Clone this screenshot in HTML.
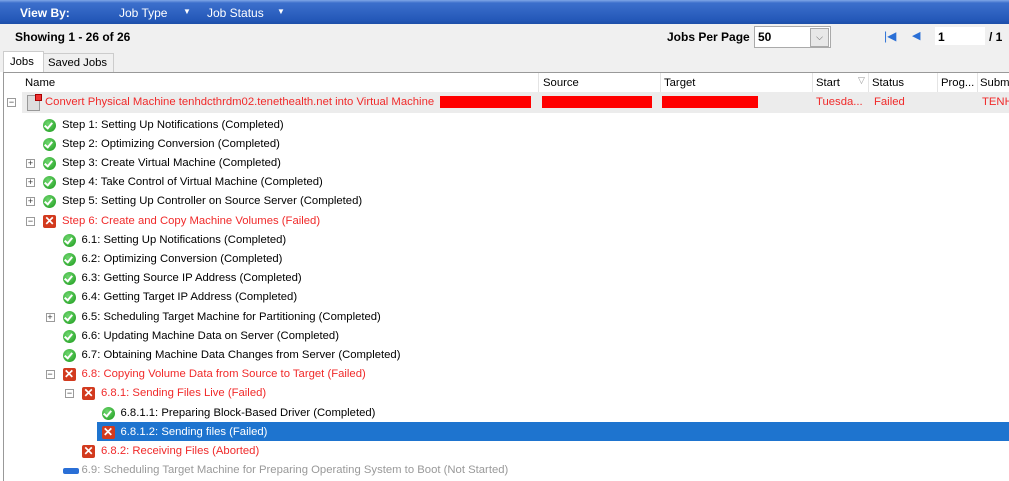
<!DOCTYPE html><html><head><style>
body{margin:0;width:1009px;height:480px;overflow:hidden;background:#fff;font-family:"Liberation Sans",sans-serif;font-size:11px;position:relative}
.a{position:absolute;white-space:nowrap}
.bar{left:0;top:0;width:1009px;height:24px;background:linear-gradient(#7fa6e6 0,#3c6fcc 3px,#2458b8 20px,#1c4ea8 24px)}
.ok{width:13px;height:13px;border-radius:50%;background:radial-gradient(circle at 40% 35%,#6fd66f,#1a9a1a);}
.ok::after{content:"";position:absolute;left:3px;top:2px;width:3px;height:6px;border:solid #fff;border-width:0 2px 2px 0;transform:rotate(40deg)}
.x{width:13px;height:13px;border-radius:2px;background:#d23a1e;color:#fff;font-weight:bold;font-size:12px;line-height:13px;text-align:center}
.ex{width:7px;height:7px;border:1px solid #9a9a9a;background:#fff;font-size:9px;line-height:7px;text-align:center;color:#333}
.r{color:#f02a2a}
.red{background:#f00;height:12px}
.t{font-size:11.3px}
</style></head><body>
<div class="a bar"></div>
<span class="a" style="left:20px;top:6px;color:#fff;font-size:12px;font-weight:bold">View By:</span>
<span class="a" style="left:119px;top:6px;color:#fff;font-size:12px">Job Type</span>
<span class="a" style="left:183px;top:7px;color:#fff;font-size:8px">▼</span>
<span class="a" style="left:207px;top:6px;color:#fff;font-size:12px">Job Status</span>
<span class="a" style="left:277px;top:7px;color:#fff;font-size:8px">▼</span>
<div class="a" style="left:0;top:24px;width:1009px;height:48px;background:#f0f0f0"></div>
<span class="a" style="left:15px;top:30px;font-weight:bold;font-size:12px">Showing 1 - 26 of 26</span>
<span class="a" style="left:667px;top:30px;font-weight:bold;font-size:12px">Jobs Per Page</span>
<div class="a" style="left:754px;top:26px;width:75px;height:20px;border:1px solid #aaa;background:#fff"></div>
<span class="a" style="left:758px;top:30px;font-weight:bold;font-size:12px">50</span>
<div class="a" style="left:810px;top:28px;width:17px;height:17px;border:1px solid #aaa;background:#e8e8e8;font-size:9px;text-align:center;line-height:17px;color:#555">⌵</div>
<span class="a" style="left:884px;top:29px;color:#2a6fd6;font-size:12px">|◀</span>
<span class="a" style="left:912px;top:29px;color:#2a6fd6;font-size:11px">◀</span>
<div class="a" style="left:935px;top:27px;width:50px;height:18px;background:#fff"></div>
<span class="a" style="left:938px;top:30px;font-weight:bold;font-size:12px">1</span>
<span class="a" style="left:989px;top:30px;font-weight:bold;font-size:12px">/ 1</span>
<div class="a" style="left:3px;top:51px;width:39px;height:21px;background:#fff;border:1px solid #ccc;border-bottom:none"></div>
<span class="a t" style="left:10px;top:56px">Jobs</span>
<div class="a" style="left:43px;top:53px;width:69px;height:18px;background:#f0f0f0;border:1px solid #ccc;border-bottom:none"></div>
<span class="a t" style="left:48px;top:57px">Saved Jobs</span>
<div class="a" style="left:3px;top:72px;width:1006px;height:408px;border-left:1px solid #999;border-top:1px solid #999;background:#fff"></div>
<span class="a t" style="left:25px;top:77px">Name</span>
<span class="a t" style="left:543px;top:77px">Source</span>
<span class="a t" style="left:664px;top:77px">Target</span>
<span class="a t" style="left:816px;top:77px">Start</span>
<span class="a" style="left:858px;top:75px;color:#999;font-size:9px">▽</span>
<span class="a t" style="left:872px;top:77px">Status</span>
<span class="a t" style="left:941px;top:77px">Prog...</span>
<span class="a t" style="left:980px;top:77px">Subm</span>
<div class="a" style="left:538px;top:73px;width:1px;height:19px;background:#e4e4e4"></div>
<div class="a" style="left:660px;top:73px;width:1px;height:19px;background:#e4e4e4"></div>
<div class="a" style="left:812px;top:73px;width:1px;height:19px;background:#e4e4e4"></div>
<div class="a" style="left:868px;top:73px;width:1px;height:19px;background:#e4e4e4"></div>
<div class="a" style="left:937px;top:73px;width:1px;height:19px;background:#e4e4e4"></div>
<div class="a" style="left:977px;top:73px;width:1px;height:19px;background:#e4e4e4"></div>
<div class="a" style="left:22px;top:92px;width:987px;height:21px;background:#ececec"></div>
<div class="a ex" style="left:7px;top:98px">−</div>
<div class="a" style="left:27px;top:95px;width:11px;height:14px;background:#ddd;border:1px solid #999"></div>
<div class="a" style="left:35px;top:94px;width:5px;height:5px;background:#e33;border:1px solid #a00"></div>
<span class="a r t" style="left:45px;top:96px">Convert Physical Machine tenhdcthrdm02.tenethealth.net into Virtual Machine</span>
<div class="a red" style="left:440px;top:96px;width:91px"></div>
<div class="a red" style="left:542px;top:96px;width:110px"></div>
<div class="a red" style="left:662px;top:96px;width:96px"></div>
<span class="a r t" style="left:816px;top:96px">Tuesda...</span>
<span class="a r t" style="left:874px;top:96px">Failed</span>
<span class="a r t" style="left:982px;top:96px">TENH</span>
<div class="a" style="left:97px;top:422px;width:912px;height:19px;background:#1e74cf"></div>
<div id="rows"></div>
<script>
var R=[[0,'ok','','Step 1: Setting Up Notifications (Completed)'],[0,'ok','','Step 2: Optimizing Conversion (Completed)'],[0,'ok','+','Step 3: Create Virtual Machine (Completed)'],[0,'ok','+','Step 4: Take Control of Virtual Machine (Completed)'],[0,'ok','+','Step 5: Setting Up Controller on Source Server (Completed)'],[0,'x','−','Step 6: Create and Copy Machine Volumes (Failed)'],
[1,'ok','','6.1: Setting Up Notifications (Completed)'],[1,'ok','','6.2: Optimizing Conversion (Completed)'],[1,'ok','','6.3: Getting Source IP Address (Completed)'],[1,'ok','','6.4: Getting Target IP Address (Completed)'],[1,'ok','+','6.5: Scheduling Target Machine for Partitioning (Completed)'],[1,'ok','','6.6: Updating Machine Data on Server (Completed)'],[1,'ok','','6.7: Obtaining Machine Data Changes from Server (Completed)'],[1,'x','−','6.8: Copying Volume Data from Source to Target (Failed)'],[2,'x','−','6.8.1: Sending Files Live (Failed)'],[3,'ok','','6.8.1.1: Preparing Block-Based Driver (Completed)'],[3,'x','','6.8.1.2: Sending files (Failed)'],[2,'x','','6.8.2: Receiving Files (Aborted)'],[1,'b','','6.9: Scheduling Target Machine for Preparing Operating System to Boot (Not Started)']];
var h='';R.forEach(function(r,i){var y=115.5+i*19.2,ix=43+r[0]*19.5,c=r[1]=='x'?(i==16?'color:#fff':'color:#f02a2a'):(r[1]=='b'?'color:#999':'');
if(r[2])h+='<div class="a ex" style="left:'+(ix-17)+'px;top:'+(y+5)+'px">'+r[2]+'</div>';
if(r[1]=='b')h+='<div class="a" style="left:'+ix+'px;top:'+(y+7)+'px;width:16px;height:6px;border-radius:2px;background:#2a6fd6"></div>';
else h+='<div class="a '+r[1]+'" style="left:'+ix+'px;top:'+(y+3)+'px">'+(r[1]=='x'?'✕':'')+'</div>';
h+='<span class="a t" style="left:'+(ix+19)+'px;top:'+(y+3)+'px;'+c+'">'+r[3]+'</span>';});
document.getElementById('rows').innerHTML=h;
</script>
</body></html>
